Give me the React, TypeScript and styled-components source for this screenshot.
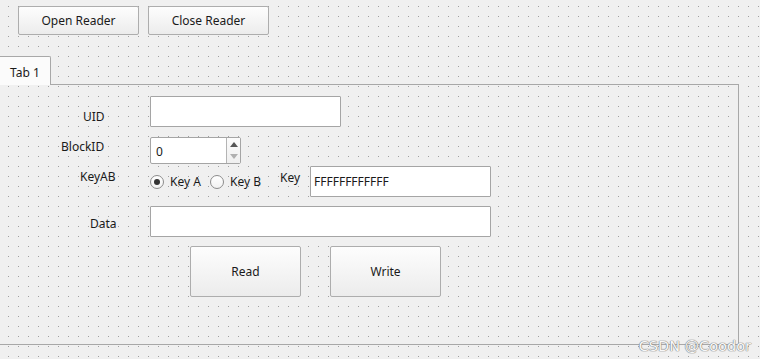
import styled, { createGlobalStyle } from "styled-components";

const GlobalStyle = createGlobalStyle`
  body {
    margin: 0;
    background: #f0f0f0;
    font-family: "Noto Sans", "Open Sans", sans-serif;
    font-size: 12px;
    color: #1a1a1a;
  }
`;

const Canvas = styled.div`
  position: relative;
  width: 760px;
  height: 359px;
  overflow: hidden;
  background-color: #f0f0f0;
  background-image:
    repeating-linear-gradient(to right, transparent 0 1px, #f0f0f0 1px 10px),
    repeating-linear-gradient(to bottom, #a0a0a0 0 1px, #f0f0f0 1px 10px);
  background-position: 8px 6px, 8px 6px;
`;

const Toolbar = styled.div`
  display: flex;
  gap: 9px;
  padding: 6px 0 0 18px;
`;

const PushButton = styled.button<{ $w: number; $h: number }>`
  width: ${(p) => p.$w}px;
  height: ${(p) => p.$h}px;
  padding: 0;
  border: 1px solid #adadad;
  border-radius: 2px;
  background: linear-gradient(#fdfdfd, #ececec);
  font-family: inherit;
  font-size: 12px;
  color: #1a1a1a;
`;

const TabBar = styled.div`
  display: flex;
  margin-top: 21px;
  position: relative;
  z-index: 1;
`;

const Tab = styled.div`
  width: 51px;
  height: 29px;
  box-sizing: border-box;
  padding: 7px 0 0 10px;
  border: 1px solid #a8a8a8;
  border-bottom: none;
  border-left: none;
  border-top-right-radius: 2px;
  background: #fbfbfb;
  margin-bottom: -1px;
`;

const Pane = styled.div`
  margin-left: -1px;
  width: 740px;
  height: 261px;
  box-sizing: border-box;
  border: 1px solid #a8a8a8;
`;

const Form = styled.div`
  display: flex;
  flex-direction: column;
  padding-top: 11px;
`;

const Row = styled.div<{ $gap?: number }>`
  display: flex;
  align-items: flex-start;
  margin-top: ${(p) => p.$gap ?? 0}px;
`;

const FieldLabel = styled.div<{ $x: number; $y: number }>`
  width: ${(p) => 150 - p.$x}px;
  padding-left: ${(p) => p.$x}px;
  padding-top: ${(p) => p.$y}px;
  line-height: 16px;
  flex-shrink: 0;
`;

const LineEdit = styled.div<{ $w: number }>`
  width: ${(p) => p.$w}px;
  height: 31px;
  box-sizing: border-box;
  border: 1px solid #a5a5a5;
  border-radius: 1px;
  background: #fff;
  padding: 6px 0 0 3px;
  line-height: 17px;
  font-size: 12px;
`;

const SpinBox = styled.div`
  display: flex;
  width: 91px;
  height: 27px;
  box-sizing: border-box;
  border: 1px solid #a5a5a5;
  border-radius: 2px;
  background: #fff;
`;

const SpinText = styled.div`
  flex: 1;
  padding: 5px 0 0 5px;
  line-height: 17px;
`;

const SpinButtons = styled.div`
  width: 13px;
  border-left: 1px solid #b4b4b4;
  display: flex;
  flex-direction: column;
  align-items: center;
  justify-content: space-around;
  background: linear-gradient(#fbfbfb, #efefef);
`;

const Arrow = styled.div<{ $up?: boolean }>`
  width: 0;
  height: 0;
  border-left: 4px solid transparent;
  border-right: 4px solid transparent;
  ${(p) =>
    p.$up
      ? "border-bottom: 5px solid #555;"
      : "border-top: 5px solid #b0b0b0;"}
`;

const RadioGroup = styled.div`
  display: flex;
  align-items: center;
  height: 31px;
`;

const RadioItem = styled.div<{ $w: number }>`
  display: flex;
  align-items: center;
  gap: 6px;
  width: ${(p) => p.$w}px;
`;

const RadioCircle = styled.span<{ $on?: boolean }>`
  width: 14px;
  height: 14px;
  box-sizing: border-box;
  border: 1px solid #8c8c8c;
  border-radius: 50%;
  background: linear-gradient(#fff, #f2f2f2);
  display: flex;
  align-items: center;
  justify-content: center;
  &::after {
    content: "";
    width: 6px;
    height: 6px;
    border-radius: 50%;
    background: ${(p) => (p.$on ? "#333" : "transparent")};
  }
`;

const KeyLabel = styled.div`
  width: 30px;
  padding-top: 4px;
  line-height: 16px;
`;

const ButtonRow = styled.div`
  display: flex;
  gap: 29px;
  margin: 9px 0 0 190px;
`;

const Watermark = styled.div`
  position: absolute;
  right: 9px;
  bottom: 5px;
  font-family: "DejaVu Sans", sans-serif;
  font-size: 14.5px;
  color: #f8f8f8;
  text-shadow: 0 0 1px #808080, 0 0 1px #808080, 0 0 1px #808080;
`;

export default function App() {
  return (
    <Canvas>
      <GlobalStyle />
      <Toolbar>
        <PushButton $w={121} $h={29}>Open Reader</PushButton>
        <PushButton $w={121} $h={29}>Close Reader</PushButton>
      </Toolbar>
      <TabBar>
        <Tab>Tab 1</Tab>
      </TabBar>
      <Pane>
        <Form>
          <Row>
            <FieldLabel $x={83} $y={13}>UID</FieldLabel>
            <LineEdit $w={191} />
          </Row>
          <Row $gap={10}>
            <FieldLabel $x={61} $y={2}>BlockID</FieldLabel>
            <SpinBox>
              <SpinText>0</SpinText>
              <SpinButtons>
                <Arrow $up />
                <Arrow />
              </SpinButtons>
            </SpinBox>
          </Row>
          <Row $gap={2}>
            <FieldLabel $x={80} $y={3}>KeyAB</FieldLabel>
            <RadioGroup>
              <RadioItem $w={60}>
                <RadioCircle $on />
                Key A
              </RadioItem>
              <RadioItem $w={70}>
                <RadioCircle />
                Key B
              </RadioItem>
            </RadioGroup>
            <KeyLabel>Key</KeyLabel>
            <LineEdit $w={181}>FFFFFFFFFFFF</LineEdit>
          </Row>
          <Row $gap={9}>
            <FieldLabel $x={90} $y={10}>Data</FieldLabel>
            <LineEdit $w={341} />
          </Row>
          <ButtonRow>
            <PushButton $w={111} $h={51}>Read</PushButton>
            <PushButton $w={111} $h={51}>Write</PushButton>
          </ButtonRow>
        </Form>
      </Pane>
      <Watermark>CSDN @Coodor</Watermark>
    </Canvas>
  );
}
